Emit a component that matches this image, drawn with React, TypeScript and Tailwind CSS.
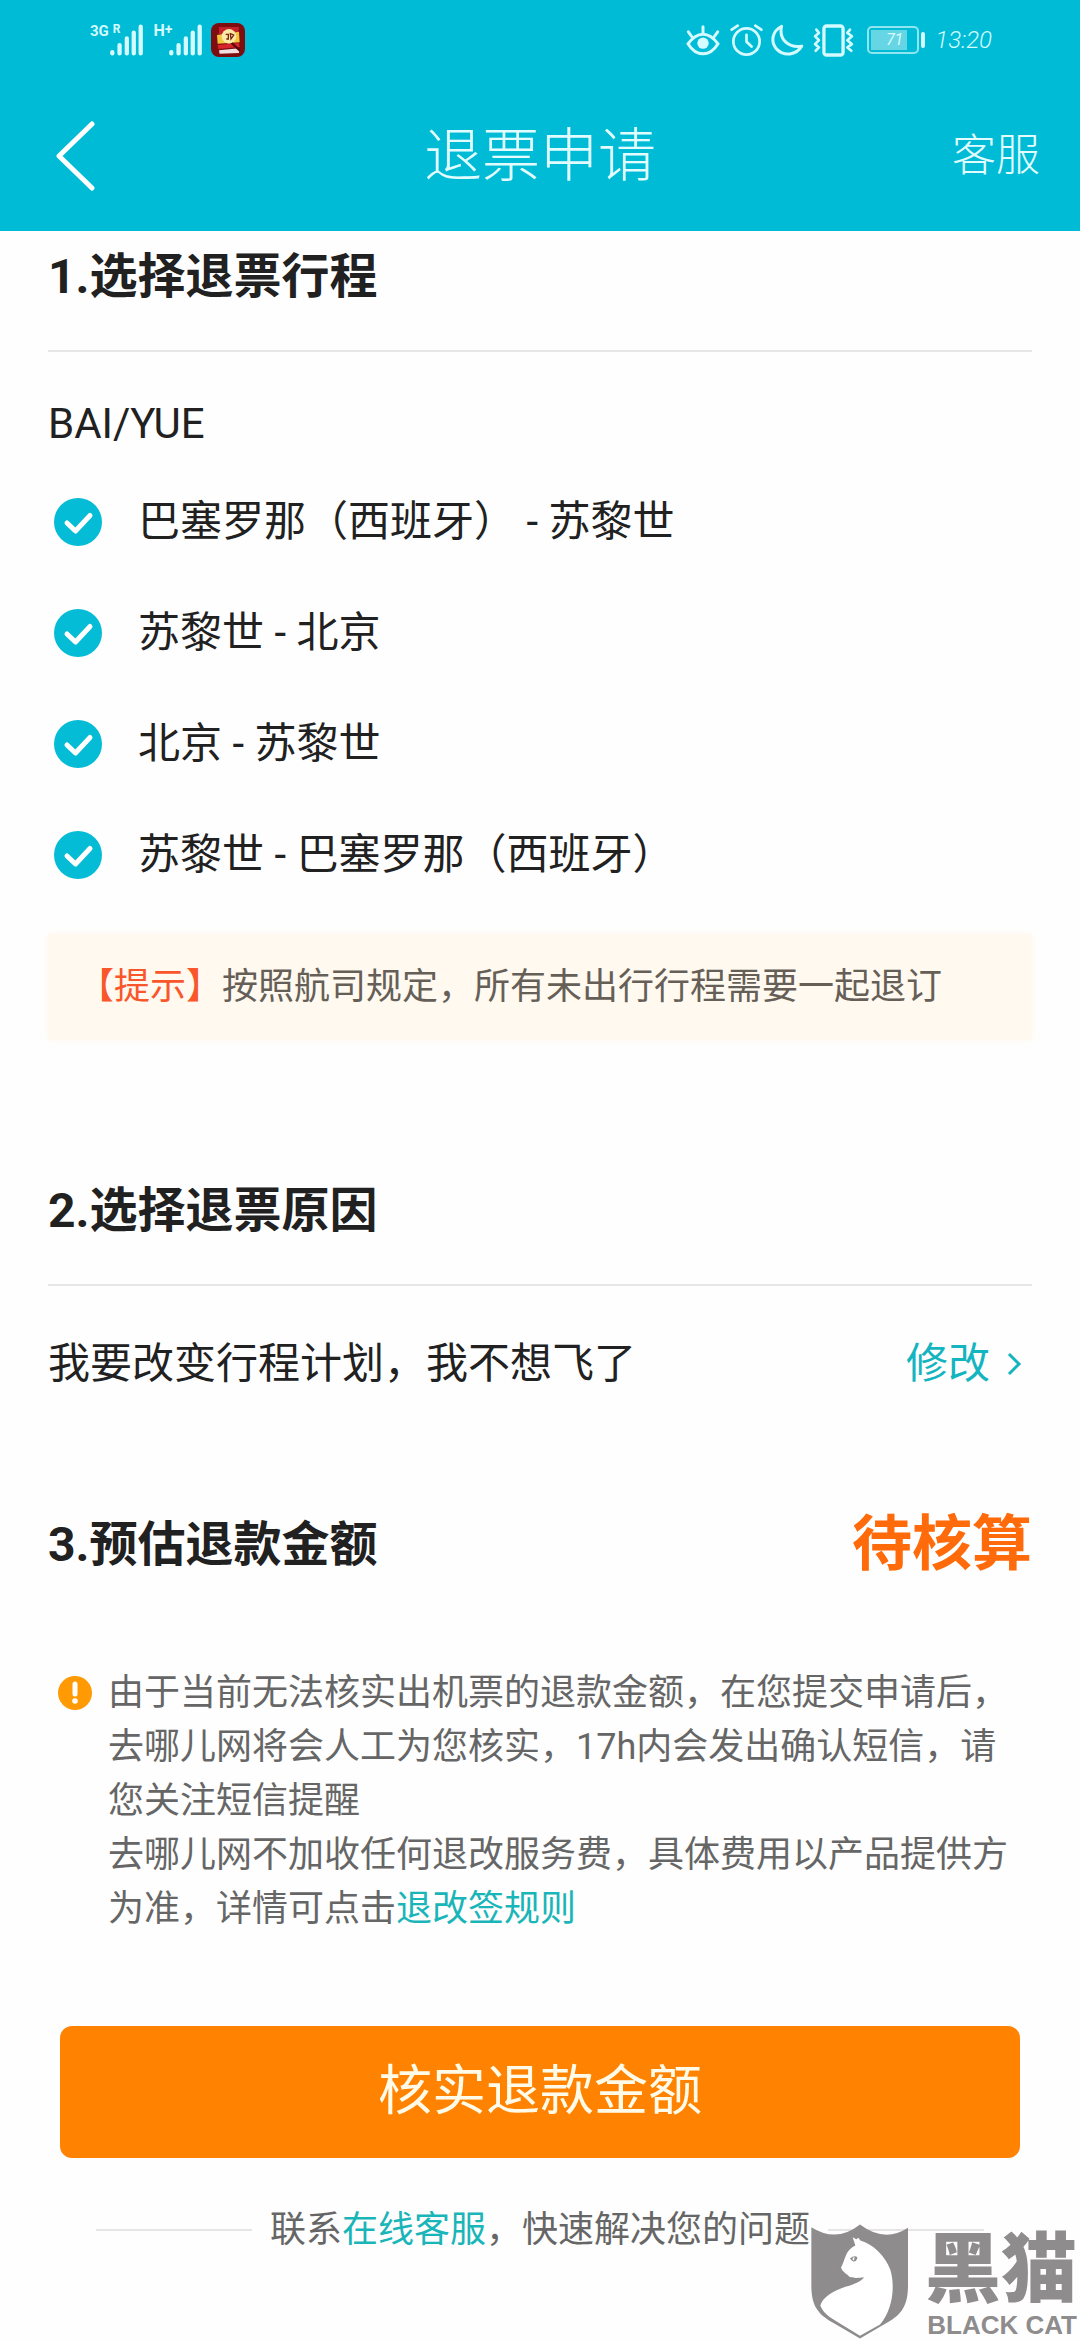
import { useState } from "react";

const TRIPS = [
  "巴塞罗那（西班牙） - 苏黎世",
  "苏黎世 - 北京",
  "北京 - 苏黎世",
  "苏黎世 - 巴塞罗那（西班牙）",
];

function SignalBars() {
  return (
    <svg viewBox="136 72 106 98" className="w-[35px] h-[33px]" fill="none" stroke="#d4fbff" strokeWidth="13" strokeLinecap="round" aria-hidden="true">
      <path d="M146 156v4M168 135v25M190 115v45M211 97v63M232 79v81" />
    </svg>
  );
}

function AppBadge() {
  return (
    <svg viewBox="0 0 102 102" className="w-[34px] h-[34px]" aria-hidden="true">
      <rect width="102" height="102" rx="24" fill="#7e0d10" />
      <path d="M24 12h60l-2 22H24z" fill="#c4202a" />
      <path d="M18 36l66-10 2 32-66 4z" fill="#f2c53d" />
      <circle cx="54" cy="40" r="22" fill="#fbe9a6" />
      <path d="M44 34h8v14h-6M58 32l10 4-8 12z" fill="none" stroke="#7a2414" strokeWidth="4" />
      <path d="M20 66l64-6 2 12-64 6z" fill="#d8232b" />
      <path d="M24 82l60-6v14l-58 2z" fill="#f3dfe0" />
      <path d="M62 60l24 22" stroke="#5a0a0c" strokeWidth="7" />
    </svg>
  );
}

function EyeIcon() {
  return (
    <svg viewBox="70 72 102 98" className="w-[34px] h-[33px]" fill="none" stroke="#d4fbff" strokeWidth="9" strokeLinecap="round" aria-hidden="true">
      <path d="M76 131c28-38 62-38 90 0-24 40-66 40-90 0z" />
      <circle cx="121" cy="129" r="17" fill="#d4fbff" stroke="none" />
      <path d="M121 80v18M77 95l10 14M165 95l-10 14" />
    </svg>
  );
}

function AlarmIcon() {
  return (
    <svg viewBox="204 72 98 98" className="w-[33px] h-[33px]" fill="none" stroke="#d4fbff" strokeWidth="8" strokeLinecap="round" strokeLinejoin="round" aria-hidden="true">
      <circle cx="253" cy="124" r="39" />
      <path d="M253 104v21l15 14M209 89l18-12M297 89l-18-12" />
    </svg>
  );
}

function MoonIcon() {
  return (
    <svg viewBox="328 72 100 98" className="w-[33px] h-[33px]" fill="none" stroke="#d4fbff" strokeWidth="9" strokeLinejoin="round" aria-hidden="true">
      <path d="M360 78c-30 16-34 48-14 70 22 22 58 18 75-10-38 6-70-18-61-60z" />
    </svg>
  );
}

function VibrateIcon() {
  return (
    <svg viewBox="454 70 128 100" className="w-[43px] h-[33px]" fill="none" stroke="#d4fbff" strokeLinejoin="round" strokeLinecap="round" aria-hidden="true">
      <rect x="489" y="76" width="58" height="88" rx="8" strokeWidth="10" />
      <path d="M466 87l8 10-12 10 12 12-12 12 12 10-10 10M568 87l-8 10 14 10-14 12 14 12-14 10 12 10" strokeWidth="8" />
    </svg>
  );
}

function StatusBar() {
  return (
    <div className="flex h-20 items-center justify-between pl-[90px] pr-[88px] text-[#d4fbff]">
      <div className="flex items-center">
        <div className="flex h-[34px] items-start font-bold">
          <span className="text-[15px] leading-4">3G</span>
          <span className="ml-1 text-[12px] leading-3">R</span>
        </div>
        <div className="-ml-3">
          <SignalBars />
        </div>
        <div className="ml-2.5 flex h-[34px] items-start font-bold">
          <span className="text-[16px] leading-4">H</span>
          <span className="text-[14px] leading-3">+</span>
        </div>
        <div className="-ml-1">
          <SignalBars />
        </div>
        <div className="ml-2">
          <AppBadge />
        </div>
      </div>
      <div className="flex items-center">
        <EyeIcon />
        <div className="ml-2.5 flex items-center gap-2">
          <AlarmIcon />
          <MoonIcon />
          <VibrateIcon />
        </div>
        <div className="ml-3 flex h-7 w-[52px] items-center rounded-[5px] border-2 border-[#8fe6f0] p-0.5">
          <div className="flex h-5 w-9 items-center justify-end bg-[#66d5e4] pr-1 text-[16px] leading-5 italic">71</div>
        </div>
        <div className="ml-0.5 h-4 w-1 rounded-sm bg-[#d4fbff]" />
        <span className="ml-2.5 text-[24px] leading-8 font-light italic">13:20</span>
      </div>
    </div>
  );
}

function SectionTitle({ children }: { children: string }) {
  return <h2 className="text-[48px] leading-[72px] font-bold">{children}</h2>;
}

function TripRow({ name }: { name: string }) {
  const [checked, setChecked] = useState(true);
  return (
    <li>
      <label className="flex h-[111px] items-center gap-9 pl-1.5">
        <span className="grid size-12 shrink-0">
          <input
            type="checkbox"
            checked={checked}
            onChange={() => setChecked(!checked)}
            className="col-start-1 row-start-1 size-12 appearance-none rounded-full border-2 border-gray-300 checked:border-0 checked:bg-[#04bcd5]"
          />
          <svg viewBox="0 0 48 48" className="pointer-events-none col-start-1 row-start-1 size-12" fill="none" stroke="#fff" strokeWidth="5" strokeLinecap="round" strokeLinejoin="round">
            <path d="M13 25l8.500 8L36 17.500" />
          </svg>
        </span>
        <span className="text-[42px] leading-[60px]">{name}</span>
      </label>
    </li>
  );
}

function BlackCatMark() {
  return (
    <div className="absolute right-0 bottom-0 flex items-end text-[#8f8c8d]">
      <svg viewBox="60 72 300 350" className="h-[117px] w-[100px]" aria-hidden="true">
        <path fill="currentColor" d="M64 84Q140 132 210 76Q284 132 354 86V258C354 318 336 346 292 370L210 418L128 370C82 344 64 318 64 258Z" />
        <path fill="#fff" d="M188 114L199 120L205 116L211 124C250 136 286 170 301 212C317 264 306 336 270 376L210 410L134 363C112 350 98 338 91 319C98 294 130 276 166 263C192 255 214 247 222 234C206 237 190 238 178 233C172 224 158 220 153 205C162 190 166 162 180 150Q188 143 196 139Z" />
        <path fill="currentColor" d="M180 177q14-10 22-3-2 14-12 13-6-2-10-10z" />
        <path fill="#fff" d="M188 175l6-1-2 10-4-2z" />
      </svg>
      <div className="flex w-[170px] flex-col items-end pr-[3px]">
        <span className="text-[76px] leading-20 font-black">黑猫</span>
        <span className="font-['Liberation_Sans',sans-serif] text-[26px] leading-[30px] font-bold whitespace-nowrap">BLACK CAT</span>
      </div>
    </div>
  );
}

export default function App() {
  return (
    <div className="relative min-h-screen bg-[#fefefe] font-[Roboto,'Noto_Sans_CJK_SC',sans-serif] text-[#212121]">
      <header className="bg-[#00bbd6] text-[#e2fdff]">
        <StatusBar />
        <nav className="grid h-[151px] grid-cols-[1fr_auto_1fr] items-center px-10">
          <button type="button" aria-label="返回" className="w-[58px] pl-3.5">
            <svg viewBox="0 0 44 70" className="h-[70px] w-[44px]" fill="none" stroke="#fff" strokeWidth="5" strokeLinecap="round" strokeLinejoin="round">
              <path d="M38 3L5 35l33 32" />
            </svg>
          </button>
          <h1 className="text-[58px] leading-[72px] font-light">退票申请</h1>
          <a href="#service" className="justify-self-end text-[44px] leading-[60px] font-light">客服</a>
        </nav>
      </header>

      <main className="px-12 pt-2.5 pb-[76px]">
        <section>
          <div className="border-b-2 border-[#e6e6e6] pb-[37px]">
            <SectionTitle>1.选择退票行程</SectionTitle>
          </div>
          <p className="mt-[42px] text-[42px] leading-[60px]">BAI/YUE</p>
          <ul className="mt-3">
            {TRIPS.map((trip) => (
              <TripRow key={trip} name={trip} />
            ))}
          </ul>
          <p className="mt-6 bg-[#fff9ef] px-[30px] py-[26px] text-[36px] leading-[54px] text-[#665f58] shadow-[0_0_8px_#fff9ef]">
            <span className="text-[#f9572b]">【提示】</span>按照航司规定，所有未出行行程需要一起退订
          </p>
        </section>

        <section className="mt-[135px]">
          <div className="border-b-2 border-[#e6e6e6] pb-[37px]">
            <SectionTitle>2.选择退票原因</SectionTitle>
          </div>
          <div className="mt-12 flex items-center justify-between text-[42px] leading-[60px]">
            <p>我要改变行程计划，我不想飞了</p>
            <button type="button" className="flex items-center gap-4 pr-2.5 text-[#14b4c0]">
              修改
              <svg viewBox="0 0 16 24" className="h-6 w-4" fill="none" stroke="currentColor" strokeWidth="3">
                <path d="M3 2l10 10L3 22" />
              </svg>
            </button>
          </div>
        </section>

        <section className="mt-[115px]">
          <div className="flex items-center justify-between">
            <SectionTitle>3.预估退款金额</SectionTitle>
            <strong className="text-[60px] leading-[72px] font-bold text-[#ff6a0a]">待核算</strong>
          </div>
          <div className="mt-[85px] flex gap-4 pr-5 pl-2.5 text-[36px] leading-[54px] text-[#666]">
            <svg viewBox="0 0 34 34" className="mt-2.5 size-[34px] shrink-0" aria-hidden="true">
              <circle cx="17" cy="17" r="17" fill="#ff9a05" />
              <path d="M17 8v10" stroke="#fff" strokeWidth="5" strokeLinecap="round" />
              <circle cx="17" cy="25" r="2.800" fill="#fff" />
            </svg>
            <div>
              <p>由于当前无法核实出机票的退款金额，在您提交申请后，去哪儿网将会人工为您核实，17h内会发出确认短信，请您关注短信提醒</p>
              <p>
                去哪儿网不加收任何退改服务费，具体费用以产品提供方为准，详情可点击
                <a href="#rules" className="text-[#1ab5b8]">退改签规则</a>
              </p>
            </div>
          </div>
        </section>

        <div className="mt-[90px] px-3">
          <button type="button" className="h-[132px] w-full rounded-xl bg-[#ff8200] text-[54px] leading-[72px] text-[#fffbe8]">
            核实退款金额
          </button>
        </div>

        <div className="mt-[45px] flex items-center gap-[18px] px-12 text-[36px] leading-[54px] text-[#666]">
          <span className="h-0.5 flex-1 bg-[#e6e4e4]" />
          <p>
            联系<a href="#service" className="text-[#1ab5b8]">在线客服</a>，快速解决您的问题
          </p>
          <span className="h-0.5 flex-1 bg-[#e6e4e4]" />
        </div>
      </main>
      <BlackCatMark />
    </div>
  );
}
